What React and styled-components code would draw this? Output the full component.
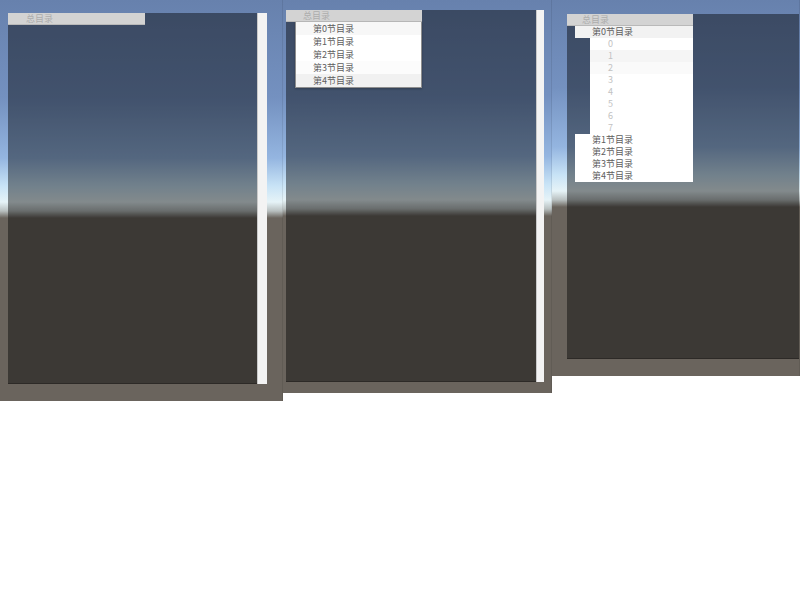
import React from 'react';
import styled, { createGlobalStyle } from 'styled-components';

const GlobalStyle = createGlobalStyle`
  html, body {
    margin: 0;
    padding: 0;
    background: #ffffff;
  }
  body {
    font-family: "Noto Sans CJK SC", "Noto Sans", sans-serif;
  }
`;

const Stage = styled.div`
  display: flex;
  align-items: flex-start;
  width: 800px;
`;

// one game view: skybox behind, with a dim scroll panel on top
const Frame = styled.div`
  box-sizing: border-box;
  flex: none;
  width: ${(p) => p.$w}px;
  height: ${(p) => p.$h}px;
  padding: ${(p) => p.$pad};
  display: flex;
  background: linear-gradient(
    to bottom,
    #6781ad 0px,
    #7491c0 ${(p) => p.$horizon - 120}px,
    #94b5e0 ${(p) => p.$horizon - 60}px,
    #c8e3f6 ${(p) => p.$horizon - 32}px,
    #e6f3f7 ${(p) => p.$horizon - 16}px,
    #b8bfbf ${(p) => p.$horizon - 7}px,
    #6a645d ${(p) => p.$horizon}px,
    #6a645d 100%
  );
  border-right: 1px solid rgba(0, 0, 0, 0.08);
`;

const Viewport = styled.div`
  flex: 1;
  min-width: 0;
  display: flex;
  flex-direction: column;
  align-items: flex-start;
  background: rgba(0, 0, 0, 0.43);
  box-shadow: inset 0 -1px 0 rgba(0, 0, 0, 0.25);
`;

const ScrollBar = styled.div`
  flex: none;
  width: ${(p) => p.$w}px;
  background: #f3f3f3;
  border-left: 1px solid #c9c9c9;
  box-sizing: border-box;
`;

const Header = styled.div`
  box-sizing: border-box;
  width: ${(p) => p.$w}px;
  height: 12px;
  line-height: 12px;
  padding-left: ${(p) => p.$indent}px;
  background: #d3d3d3;
  border-bottom: 1px solid #b9b9b9;
  color: #adadad;
  font-size: 9px;
  white-space: nowrap;
`;

const Menu = styled.div`
  box-sizing: border-box;
  width: ${(p) => p.$w}px;
  margin-left: ${(p) => p.$left}px;
  border: ${(p) => (p.$framed ? '1px solid #8e8e8e' : 'none')};
  border-top: none;
  box-shadow: ${(p) => (p.$framed ? '0 1px 2px rgba(0,0,0,0.25)' : 'none')};
`;

const Row = styled.div`
  height: ${(p) => p.$h}px;
  line-height: ${(p) => p.$h}px;
  padding-left: ${(p) => p.$indent}px;
  background: ${(p) => p.$bg || '#ffffff'};
  color: ${(p) => (p.$faint ? '#c2c2c2' : '#5e5e5e')};
  font-size: 9px;
  white-space: nowrap;
`;

const SubList = styled.div`
  margin-left: ${(p) => p.$left}px;
`;

const sections = [0, 1, 2, 3, 4];
const collapsedBg = ['#f7f7f7', '#ffffff', '#ffffff', '#fcfcfc', '#f1f1f1'];
const childBg = ['#ffffff', '#f5f5f5', '#fafafa', '#ffffff', '#ffffff', '#ffffff', '#ffffff', '#ffffff'];

const App = () => {
  return (
    <>
      <GlobalStyle />
      <Stage>
        <Frame $w={283} $h={401} $pad="13px 15px 17px 8px" $horizon={218}>
          <Viewport>
            <Header $w={137} $indent={18}>总目录</Header>
          </Viewport>
          <ScrollBar $w={10} />
        </Frame>

        <Frame $w={269} $h={393} $pad="10px 7px 11px 3px" $horizon={216}>
          <Viewport>
            <Header $w={136} $indent={17}>总目录</Header>
            <Menu $w={127} $left={9} $framed>
              {sections.map((n) => (
                <Row key={n} $h={13} $indent={17} $bg={collapsedBg[n]}>
                  第{n}节目录
                </Row>
              ))}
            </Menu>
          </Viewport>
          <ScrollBar $w={8} />
        </Frame>

        <Frame $w={248} $h={376} $pad="14px 0 17px 15px" $horizon={207}>
          <Viewport>
            <Header $w={126} $indent={15}>总目录</Header>
            <Menu $w={118} $left={8}>
              <Row $h={12} $indent={17} $bg="#f2f2f2">第0节目录</Row>
              <SubList $left={15}>
                {childBg.map((bg, i) => (
                  <Row key={i} $h={12} $indent={18} $bg={bg} $faint>
                    {i}
                  </Row>
                ))}
              </SubList>
              {sections.slice(1).map((n) => (
                <Row key={n} $h={12} $indent={17}>
                  第{n}节目录
                </Row>
              ))}
            </Menu>
          </Viewport>
        </Frame>
      </Stage>
    </>
  );
};

export default App;
